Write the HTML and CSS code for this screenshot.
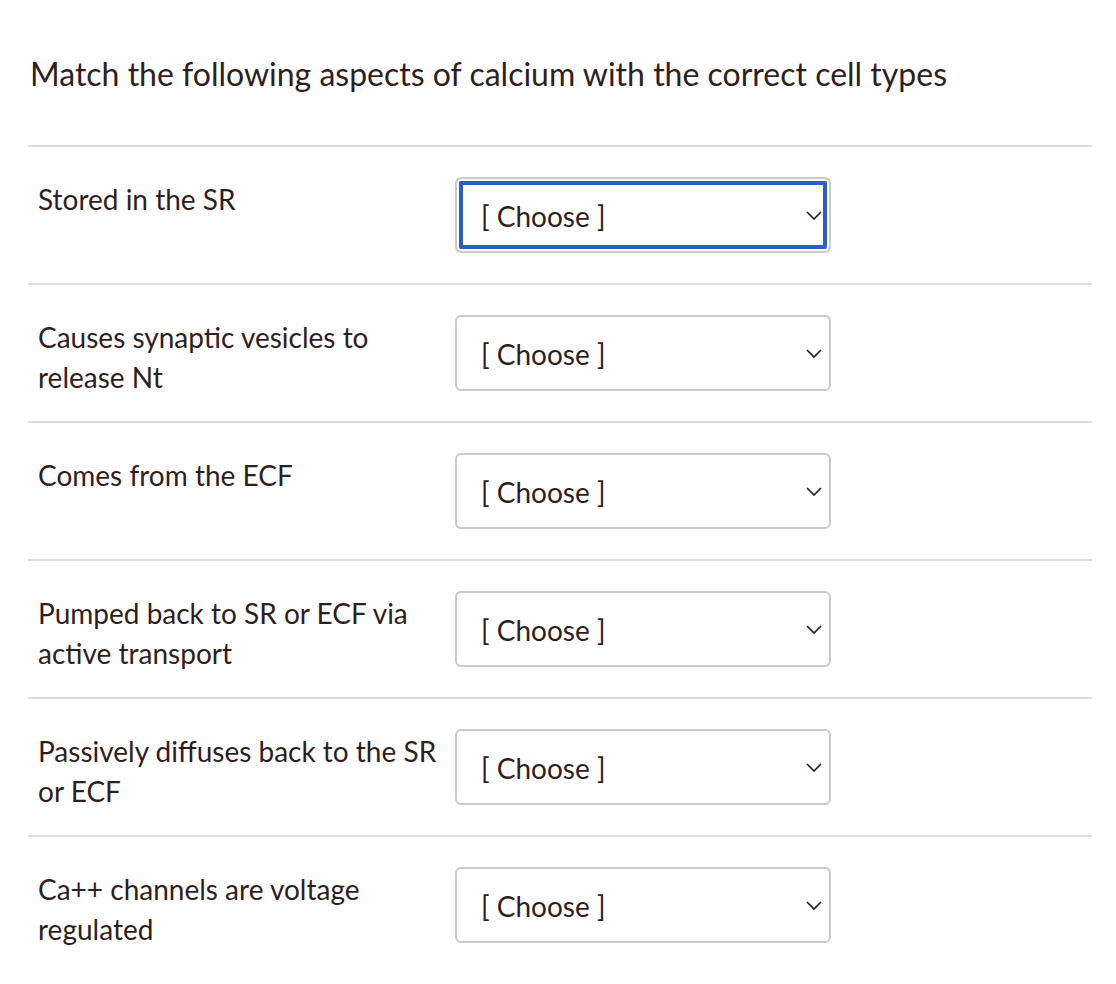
FILE: index.html
```html
<!DOCTYPE html>
<html lang="en">
<head>
    <meta charset="UTF-8">
    <meta name="viewport" content="width=device-width, initial-scale=1.0">
    <title>Quiz Question</title>
    <link rel="stylesheet" href="styles.css">
</head>
<body>
    <div class="question">
        <h2 class="question-text">Match the following aspects of calcium with the correct cell types</h2>

        <div class="answer-row">
            <div class="answer-label">Stored in the SR</div>
            <div class="select-wrap">
                <select class="answer-select focused">
                    <option>[ Choose ]</option>
                </select>
                <svg class="chevron" viewBox="0 0 16 9"><path d="M1 1l7 7 7-7"/></svg>
            </div>
        </div>

        <div class="answer-row">
            <div class="answer-label">Causes synaptic vesicles to release Nt</div>
            <div class="select-wrap">
                <select class="answer-select">
                    <option>[ Choose ]</option>
                </select>
                <svg class="chevron" viewBox="0 0 16 9"><path d="M1 1l7 7 7-7"/></svg>
            </div>
        </div>

        <div class="answer-row">
            <div class="answer-label">Comes from the ECF</div>
            <div class="select-wrap">
                <select class="answer-select">
                    <option>[ Choose ]</option>
                </select>
                <svg class="chevron" viewBox="0 0 16 9"><path d="M1 1l7 7 7-7"/></svg>
            </div>
        </div>

        <div class="answer-row">
            <div class="answer-label">Pumped back to SR or ECF via active transport</div>
            <div class="select-wrap">
                <select class="answer-select">
                    <option>[ Choose ]</option>
                </select>
                <svg class="chevron" viewBox="0 0 16 9"><path d="M1 1l7 7 7-7"/></svg>
            </div>
        </div>

        <div class="answer-row">
            <div class="answer-label">Passively diffuses back to the SR or ECF</div>
            <div class="select-wrap">
                <select class="answer-select">
                    <option>[ Choose ]</option>
                </select>
                <svg class="chevron" viewBox="0 0 16 9"><path d="M1 1l7 7 7-7"/></svg>
            </div>
        </div>

        <div class="answer-row">
            <div class="answer-label">Ca++ channels are voltage regulated</div>
            <div class="select-wrap">
                <select class="answer-select">
                    <option>[ Choose ]</option>
                </select>
                <svg class="chevron" viewBox="0 0 16 9"><path d="M1 1l7 7 7-7"/></svg>
            </div>
        </div>
    </div>
</body>
</html>
```

FILE: styles.css
```css
body {
    margin: 0;
    background: #fff;
    color: #2f1e1e;
    font-family: Lato, "Noto Sans", sans-serif;
}
.question {
    margin-left: 28px;
    width: 1064px;
}
.question-text {
    margin: 0;
    padding: 54px 2px 51px;
    font-size: 32px;
    font-weight: 400;
    line-height: 40px;
}
.answer-row {
    box-sizing: border-box;
    height: 138px;
    display: flex;
    align-items: flex-start;
    border-top: 2px solid #dedede;
    padding: 30px 0 0 10px;
}
.answer-label {
    width: 408px;
    padding-top: 2px;
    font-size: 28px;
    line-height: 40px;
}
.select-wrap {
    position: relative;
    margin-left: 9px;
}
.answer-select {
    appearance: none;
    -webkit-appearance: none;
    display: block;
    box-sizing: border-box;
    width: 376px;
    height: 76px;
    padding: 2px 40px 0 24px;
    border: 2px solid #cacaca;
    border-radius: 6px;
    background: #fff;
    color: #2f1e1e;
    font-family: Lato, "Noto Sans", sans-serif;
    font-size: 28px;
}
.answer-select.focused {
    box-shadow: inset 0 0 0 2px #fff, inset 0 0 0 6px #2b5fc7;
}
.chevron {
    position: absolute;
    right: 9px;
    top: 34px;
    width: 16px;
    height: 9px;
    pointer-events: none;
}
.chevron path {
    fill: none;
    stroke: #2f1e1e;
    stroke-width: 1.7;
}
```
